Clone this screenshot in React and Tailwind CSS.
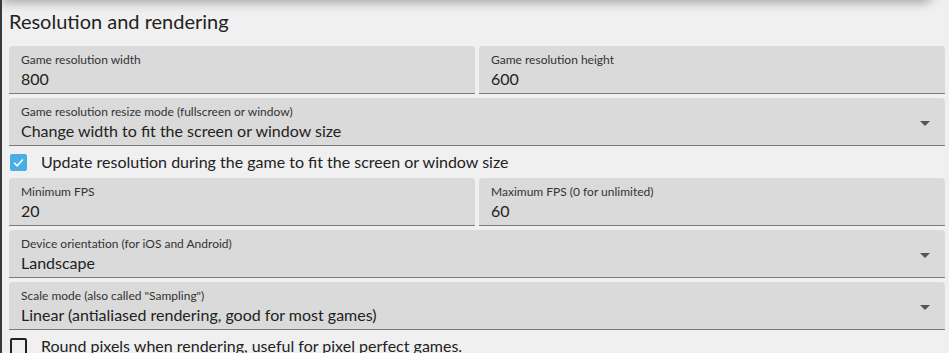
import { useState } from "react";

const font = { fontFamily: "Lato, 'Noto Sans', sans-serif" };

const TextField = ({ label, value }) => (
  <div className="h-[48px] rounded-t-[4px] bg-[#dadada] border-b border-[#7b7b7b] px-[12px] pt-[6px] flex flex-col">
    <span className="text-[12px] leading-[16px] text-[#333]">{label}</span>
    <span className="text-[16px] leading-[22px] text-[#222]">{value}</span>
  </div>
);

const SelectField = ({ label, value }) => (
  <div className="h-[48px] rounded-t-[4px] bg-[#dadada] border-b border-[#7b7b7b] pl-[12px] pr-[15px] pt-[6px] flex items-center">
    <div className="flex flex-col flex-1 self-start">
      <span className="text-[12px] leading-[16px] text-[#333]">{label}</span>
      <span className="text-[16px] leading-[22px] text-[#222]">{value}</span>
    </div>
    <svg width="10" height="5" viewBox="0 0 10 5" className="mt-[-2px]">
      <path d="M0 0 L10 0 L5 5 Z" fill="#555" />
    </svg>
  </div>
);

const Checkbox = ({ checked, label, onToggle }) => (
  <div className="h-[32px] flex items-center pl-[1px] cursor-pointer" onClick={onToggle}>
    {checked ? (
      <div className="w-[17px] h-[17px] rounded-[2px] bg-[#4aaee6] flex items-center justify-center">
        <svg width="13" height="13" viewBox="0 0 24 24">
          <path d="M4 12.5 L9.5 18 L20 6.5" fill="none" stroke="#fff" strokeWidth="3" />
        </svg>
      </div>
    ) : (
      <div className="w-[17px] h-[17px] rounded-[2px] border-2 border-[#222]" />
    )}
    <span className="ml-[14px] text-[16px] text-[#222]">{label}</span>
  </div>
);

const App = () => {
  const [updateRes, setUpdateRes] = useState(true);
  const [roundPixels, setRoundPixels] = useState(false);

  return (
    <div className="relative w-[949px] h-[353px] overflow-hidden bg-[#f0f0f0] border-l-2 border-[#3a3a3a]" style={font}>
      {/* shadow from the bar above */}
      <div className="absolute left-0 top-[-20px] w-[930px] h-[20px] rounded-br-[8px] shadow-[0_2px_12px_rgba(0,0,0,0.35)]" />
      <div className="pl-[7px] pr-[4px]">
        <h2 className="h-[46px] pt-[7px] text-[20px] leading-[28px] text-[#222]">Resolution and rendering</h2>
        <div className="flex flex-col gap-[4px]">
          <div className="grid grid-cols-2 gap-[4px]">
            <TextField label="Game resolution width" value="800" />
            <TextField label="Game resolution height" value="600" />
          </div>
          <SelectField
            label="Game resolution resize mode (fullscreen or window)"
            value="Change width to fit the screen or window size"
          />
        </div>
        <Checkbox
          checked={updateRes}
          onToggle={() => setUpdateRes(!updateRes)}
          label="Update resolution during the game to fit the screen or window size"
        />
        <div className="flex flex-col gap-[4px]">
          <div className="grid grid-cols-2 gap-[4px]">
            <TextField label="Minimum FPS" value="20" />
            <TextField label="Maximum FPS (0 for unlimited)" value="60" />
          </div>
          <SelectField label="Device orientation (for iOS and Android)" value="Landscape" />
          <SelectField
            label='Scale mode (also called "Sampling")'
            value="Linear (antialiased rendering, good for most games)"
          />
        </div>
        <Checkbox
          checked={roundPixels}
          onToggle={() => setRoundPixels(!roundPixels)}
          label="Round pixels when rendering, useful for pixel perfect games."
        />
      </div>
    </div>
  );
};

export default App;
